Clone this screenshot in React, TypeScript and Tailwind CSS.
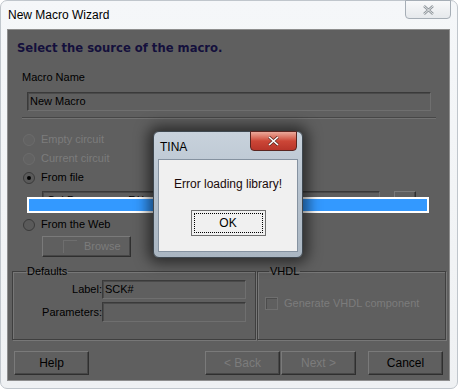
import React from 'react';

const sunken = 'border border-t-[#3a3a3a] border-l-[#3a3a3a] border-b-[#6f6f6f] border-r-[#6f6f6f] shadow-[inset_1px_1px_0_#4a4a4a]';
const raised = 'border border-t-[#7a7a7a] border-l-[#7a7a7a] border-b-[#2f2f2f] border-r-[#2f2f2f] shadow-[inset_-1px_-1px_0_#474747]';

const Radio = ({ label, checked, disabled }: { label: string; checked?: boolean; disabled?: boolean }) => (
  <div className="flex items-center h-[19px] pl-[15px]">
    <div
      className={`w-[12px] h-[12px] rounded-full border flex items-center justify-center ${
        disabled ? 'border-[#6c6c6c] bg-[#626262]' : 'border-[#3a3a3a] bg-[#5a5a5a]'
      }`}
    >
      {checked && <div className="w-[4px] h-[4px] rounded-full bg-black" />}
    </div>
    <span className={`ml-[6px] ${disabled ? 'text-[#7c7c7c]' : 'text-black'}`}>{label}</span>
  </div>
);

const Button = ({ label, disabled, className = '' }: { label: string; disabled?: boolean; className?: string }) => (
  <div
    className={`h-[24px] w-[75px] flex items-center justify-center ${raised} ${
      disabled ? 'text-[#7c7c7c]' : 'text-black'
    } ${className}`}
  >
    {label}
  </div>
);

const App = () => {
  return (
    <div className="relative w-[458px] h-[390px] bg-white overflow-hidden font-['Liberation_Sans',Arial,sans-serif] text-[12px] leading-[14px]">
      {/* main window */}
      <div className="w-[458px] h-[389px] rounded-[7px] border border-[#c0c6cc] bg-gradient-to-b from-[#f5f7f9] to-[#eff1f3] flex flex-col">
        <div className="h-[28px] flex items-start">
          <span className="mt-[7px] ml-[7px] text-black">New Macro Wizard</span>
          <div className="ml-auto mr-[6px] -mt-px w-[46px] h-[19px] rounded-b-[4px] border border-[#a6aeb6] bg-gradient-to-b from-[#f8f9fa] to-[#e6e9ec] flex items-center justify-center">
            <svg width="13" height="10" viewBox="0 0 13 10">
              <path d="M2 1 L11 9 M11 1 L2 9" stroke="#8f969c" strokeWidth="2.4" />
              <path d="M2 1 L11 9 M11 1 L2 9" stroke="#f6f7f8" strokeWidth="0.8" />
            </svg>
          </div>
        </div>

        {/* client area */}
        <div className="ml-[6px] w-[443px] h-[352px] border border-[#8e8e8e] bg-[#5f5f5f] flex flex-col text-[11px] leading-[13px]">
          <div className="pt-[10px] pl-[9px] h-[26px] font-['DejaVu_Sans',Verdana,sans-serif] font-bold text-[11.6px] leading-[16px] text-[#14103c]">
            Select the source of the macro.
          </div>

          <div className="mt-[14px] pl-[14px] h-[14px] leading-[14px] text-black">Macro Name</div>
          <div className={`mt-[8px] ml-[19px] w-[404px] h-[19px] ${sunken} flex items-center pl-[2px] text-black`}>
            New Macro
          </div>
          <div className="mt-[6px] ml-[14px] w-[414px] h-[2px] border-t border-t-[#474747] border-b border-b-[#727272]" />

          <div className="mt-[11px] flex flex-col">
            <Radio label="Empty circuit" disabled />
            <Radio label="Current circuit" disabled />
            <Radio label="From file" checked />
          </div>

          <div className="mt-[4px] flex items-start h-[19px]">
            <div className={`ml-[34px] w-[338px] h-[19px] ${sunken} flex items-center pl-[4px] text-black`}>
              <span className="tracking-[2px]">C:\Program Files\...</span>
            </div>
            <div className={`ml-[14px] w-[22px] h-[19px] ${raised}`} />
          </div>

          <div className="mt-[5px]">
            <Radio label="From the Web" />
          </div>

          <div className={`mt-[2px] ml-[34px] w-[89px] h-[21px] ${raised} flex items-center pl-[20px] text-[#7c7c7c]`}>
            <div className="w-[14px] h-[13px] border-t border-l border-[#6e6e6e]" />
            <span className="ml-[7px]">Browse</span>
          </div>

          <div className="mt-[8px] ml-[4px] flex gap-[1px] h-[75px]">
            <fieldset className="w-[244px] h-[75px] border border-[#3f3f3f] shadow-[inset_1px_1px_0_#777777,1px_1px_0_#777777] pl-[7px] pr-[9px]">
              <legend className="ml-[6px] px-[1px] text-black">Defaults</legend>
              <div className="mt-[2px] grid grid-cols-[82px_1fr] gap-y-[3px] items-center">
                <span className="text-right text-black">Label:</span>
                <div className={`h-[19px] ${sunken} flex items-center pl-[2px] text-black`}>SCK#</div>
                <span className="text-right text-black">Parameters:</span>
                <div className={`h-[20px] ${sunken}`} />
              </div>
            </fieldset>
            <fieldset className="w-[189px] h-[75px] border border-[#3f3f3f] shadow-[inset_1px_1px_0_#777777,1px_1px_0_#777777] pl-[7px]">
              <legend className="ml-[4px] px-[1px] text-black">VHDL</legend>
              <div className="mt-[19px] flex items-center text-[#7c7c7c]">
                <div className="w-[13px] h-[13px] border border-[#6f6f6f] shadow-[inset_1px_1px_0_#4c4c4c]" />
                <span className="ml-[6px]">Generate VHDL component</span>
              </div>
            </fieldset>
          </div>

          <div className="mt-[11px] flex items-center pl-[6px] text-[12px]">
            <Button label="Help" />
            <Button label="< Back" disabled className="ml-[116px]" />
            <Button label="Next >" disabled className="ml-[1px]" />
            <Button label="Cancel" className="ml-[12px]" />
          </div>
        </div>
      </div>

      {/* highlighted drop-down bar */}
      <div className="absolute left-[27px] top-[197px] w-[402px] h-[16px] border-2 border-white bg-[#3399ff]" />

      {/* TINA message box */}
      <div className="absolute left-[153px] top-[131px] w-[150px] h-[127px] rounded-[6px] border border-[#3f4850] bg-gradient-to-b from-[#c8d2dc] via-[#b5c1cd] to-[#aab6c2] shadow-[0_0_14px_5px_rgba(0,0,0,0.55)] flex flex-col">
        <div className="h-[27px] flex items-start">
          <span className="mt-[8px] ml-[6px] text-black">TINA</span>
          <div className="ml-auto mr-[5px] -mt-px w-[47px] h-[20px] rounded-b-[4px] border border-[#5a2520] bg-gradient-to-b from-[#eba99b] via-[#cc4637] to-[#b8352a] flex items-center justify-center">
            <svg width="13" height="10" viewBox="0 0 13 10">
              <path d="M2 1 L11 9 M11 1 L2 9" stroke="#5b2a24" strokeWidth="3" />
              <path d="M2 1 L11 9 M11 1 L2 9" stroke="#ffffff" strokeWidth="1.6" />
            </svg>
          </div>
        </div>
        <div className="mx-[4px] h-[93px] border border-[#8592a0] bg-[#f0f0f0] flex flex-col items-center">
          <div className="mt-[17px] text-[#1a0a0a]">Error loading library!</div>
          <div className="mt-[19px] w-[75px] h-[26px] border border-[#707070] bg-[#f0f0f0] p-[2px]">
            <div className="w-full h-full border border-dotted border-black flex items-center justify-center text-black">
              OK
            </div>
          </div>
        </div>
      </div>
    </div>
  );
};

export default App;
